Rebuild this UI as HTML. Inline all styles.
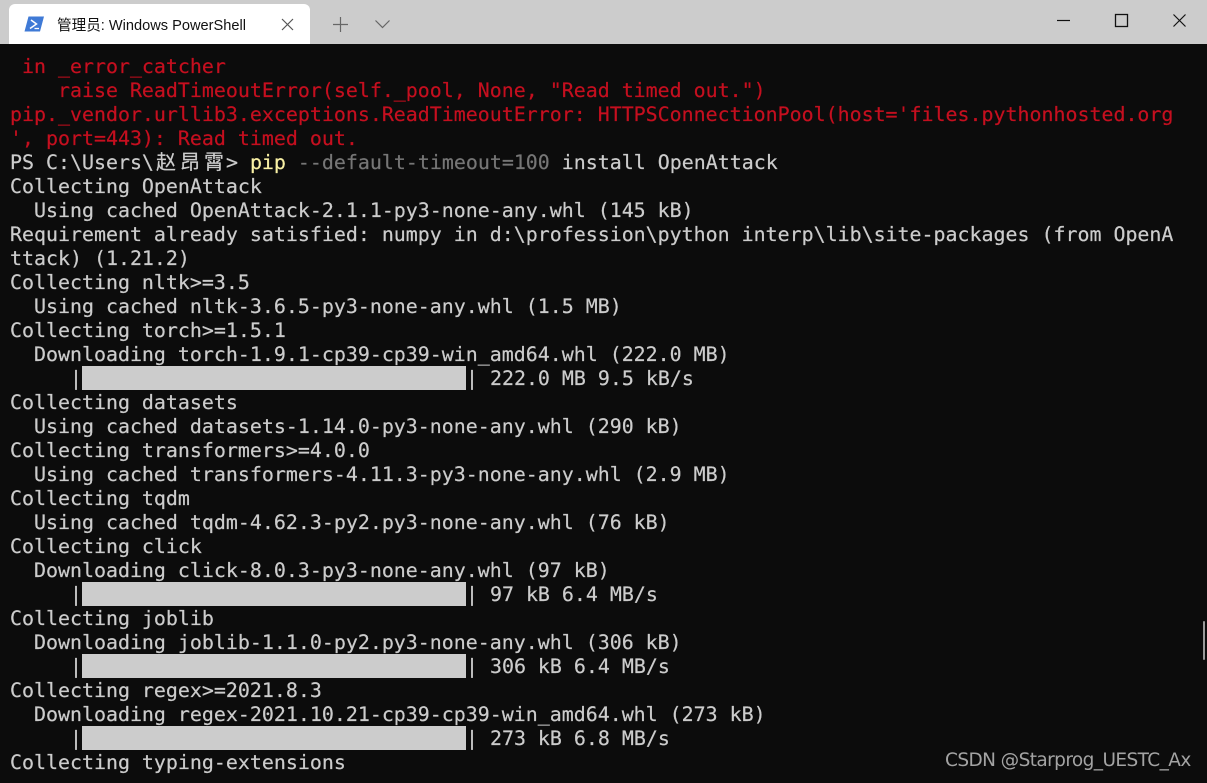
<!DOCTYPE html>
<html lang="zh"><head><meta charset="utf-8"><title>管理员: Windows PowerShell</title>
<style>
html,body{margin:0;padding:0;background:#0c0c0c}
#w{position:relative;width:1207px;height:783px;overflow:hidden;background:#0c0c0c}
#tb{position:absolute;left:0;top:0;width:1207px;height:44px;background:#cccccc}
#tab{position:absolute;left:9px;top:4px;width:301px;height:40px;background:#fff;border-radius:6px 6px 0 0}
#tt{position:absolute;left:57px;top:15px;font:14.6px/22px "Liberation Sans","Noto Sans CJK SC",sans-serif;color:#111;white-space:pre}
svg{position:absolute;left:0;top:0}
#t{position:absolute;left:10px;top:55px;height:728px;overflow:hidden;font:19.93px/24px "DejaVu Sans Mono",monospace;color:#cccccc;-webkit-text-stroke:0.2px currentColor}
#t div{height:24px;white-space:pre}
.r{color:#c50f1f}.y{color:#f9f1a5}.g{color:#767676}
.c{display:inline-block;width:24px;text-align:center;font:20px/16px "Noto Sans CJK SC",sans-serif}
.b{display:inline-block;position:relative;top:-1px;width:384px;height:24px;background:#cccccc;vertical-align:top}
#wm{position:absolute;left:945px;top:749px;font:18.5px/24px "DejaVu Sans","Liberation Sans",sans-serif;color:#a3a3a3;white-space:pre;letter-spacing:-0.59px}
#sb{position:absolute;left:1203px;top:621px;width:2px;height:39px;background:#9a9a9a;border-radius:1px}
</style></head><body><div id="w">
<div id="tb"></div><div id="tab"></div>
<div id="tt">管理员: Windows PowerShell</div>
<svg width="1207" height="44" fill="none">
<path d="M28.5 16.5H44L40 31.5H24.5Z" fill="#3f7ad6"/>
<path d="M31 20L36.5 24L30 28.5" stroke="#fff" stroke-width="1.5"/><path d="M34.5 28.5H39" stroke="#fff" stroke-width="1.3"/>
<path d="M282 19L293 30M293 19L282 30" stroke="#555" stroke-width="1.2"/>
<path d="M333 24.5H348M340.5 17V32" stroke="#666" stroke-width="1.2"/>
<path d="M375.5 20.5L382.5 27.5L389.5 20.5" stroke="#666" stroke-width="1.2"/>
<path d="M1057 20.5H1070" stroke="#111" stroke-width="1.2"/>
<rect x="1115.5" y="14.5" width="12" height="12" stroke="#111" stroke-width="1.3"/>
<path d="M1173.5 14.5L1185.5 26.5M1185.5 14.5L1173.5 26.5" stroke="#111" stroke-width="1.2"/>
</svg>
<div id="t"><div class="r"> in _error_catcher</div>
<div class="r">    raise ReadTimeoutError(self._pool, None, "Read timed out.")</div>
<div class="r">pip._vendor.urllib3.exceptions.ReadTimeoutError: HTTPSConnectionPool(host='files.pythonhosted.org</div>
<div class="r">', port=443): Read timed out.</div>
<div>PS C:\Users\<span class="c">赵</span><span class="c">昂</span><span class="c">霄</span>&gt; <span class="y">pip</span> <span class="g">--default-timeout=100</span> install OpenAttack</div>
<div>Collecting OpenAttack</div>
<div>  Using cached OpenAttack-2.1.1-py3-none-any.whl (145 kB)</div>
<div>Requirement already satisfied: numpy in d:\profession\python interp\lib\site-packages (from OpenA</div>
<div>ttack) (1.21.2)</div>
<div>Collecting nltk&gt;=3.5</div>
<div>  Using cached nltk-3.6.5-py3-none-any.whl (1.5 MB)</div>
<div>Collecting torch&gt;=1.5.1</div>
<div>  Downloading torch-1.9.1-cp39-cp39-win_amd64.whl (222.0 MB)</div>
<div>     |<span class="b"></span>| 222.0 MB 9.5 kB/s</div>
<div>Collecting datasets</div>
<div>  Using cached datasets-1.14.0-py3-none-any.whl (290 kB)</div>
<div>Collecting transformers&gt;=4.0.0</div>
<div>  Using cached transformers-4.11.3-py3-none-any.whl (2.9 MB)</div>
<div>Collecting tqdm</div>
<div>  Using cached tqdm-4.62.3-py2.py3-none-any.whl (76 kB)</div>
<div>Collecting click</div>
<div>  Downloading click-8.0.3-py3-none-any.whl (97 kB)</div>
<div>     |<span class="b"></span>| 97 kB 6.4 MB/s</div>
<div>Collecting joblib</div>
<div>  Downloading joblib-1.1.0-py2.py3-none-any.whl (306 kB)</div>
<div>     |<span class="b"></span>| 306 kB 6.4 MB/s</div>
<div>Collecting regex&gt;=2021.8.3</div>
<div>  Downloading regex-2021.10.21-cp39-cp39-win_amd64.whl (273 kB)</div>
<div>     |<span class="b"></span>| 273 kB 6.8 MB/s</div>
<div>Collecting typing-extensions</div></div>
<div id="sb"></div>
<div id="wm">CSDN @Starprog_UESTC_Ax</div>
</div></body></html>
